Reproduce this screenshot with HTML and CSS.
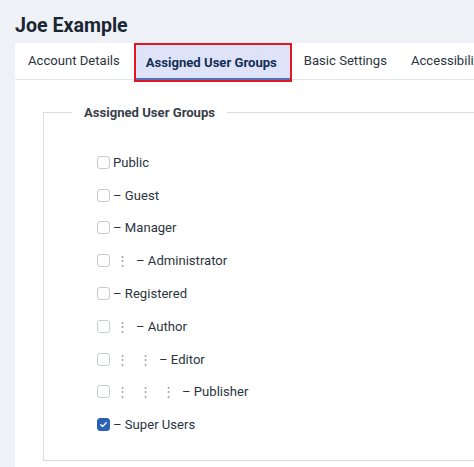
FILE: index.html
```html
<!DOCTYPE html>
<html>
<head>
<meta charset="utf-8">
<link rel="stylesheet" href="styles.css">
</head>
<body>
<div class="page">
  <h1 class="title">Joe Example</h1>
  <div class="card">
    <div class="tabs">
      <div class="tab">Account Details</div>
      <div class="tab active">Assigned User Groups</div>
      <div class="tab">Basic Settings</div>
      <div class="tab">Accessibility Settings</div>
    </div>
    <div class="body">
      <fieldset class="groups">
        <legend>Assigned User Groups</legend>
        <ul class="list">
          <li class="item"><span class="cb"></span><span class="label">Public</span></li>
          <li class="item"><span class="cb"></span><span class="label">– Guest</span></li>
          <li class="item"><span class="cb"></span><span class="label">– Manager</span></li>
          <li class="item"><span class="cb"></span><span class="dots">⋮</span><span class="label">– Administrator</span></li>
          <li class="item"><span class="cb"></span><span class="label">– Registered</span></li>
          <li class="item"><span class="cb"></span><span class="dots">⋮</span><span class="label">– Author</span></li>
          <li class="item"><span class="cb"></span><span class="dots">⋮</span><span class="dots">⋮</span><span class="label">– Editor</span></li>
          <li class="item"><span class="cb"></span><span class="dots">⋮</span><span class="dots">⋮</span><span class="dots">⋮</span><span class="label">– Publisher</span></li>
          <li class="item"><span class="cb checked"><svg viewBox="0 0 14 14" width="14" height="14"><path d="M3.6 7.2 L6 9.4 L10.4 4.8" fill="none" stroke="#fff" stroke-width="1.8" stroke-linecap="round" stroke-linejoin="round"/></svg></span><span class="label">– Super Users</span></li>
        </ul>
      </fieldset>
    </div>
  </div>
</div>
</body>
</html>
```

FILE: styles.css
```css
html, body {
  margin: 0;
  padding: 0;
}
body {
  background: #eef2f6;
  font-family: Roboto, "Liberation Sans", sans-serif;
  color: #22262a;
  overflow: hidden;
  width: 474px;
  height: 467px;
}
.page {
  padding: 14px 0 0 15px;
}
.title {
  margin: 0 0 5px 0;
  font-size: 19.6px;
  font-weight: 700;
  line-height: 24px;
  color: #1c2532;
}
.card {
  background: #fff;
  width: 520px;
  height: 440px;
}
.tabs {
  display: flex;
  height: 36px;
  border-bottom: 1px solid #e2e6ea;
  white-space: nowrap;
}
.tab {
  padding: 0 12px;
  font-size: 13.1px;
  line-height: 36px;
  color: #2b3440;
}
.tab:first-child {
  padding-left: 13px;
  padding-right: 14px;
}
.tab.active {
  margin: 0 0 -3px 0;
  padding: 0 13px 0 10px;
  line-height: 35px;
  background: #dfe3f8;
  color: #132e55;
  font-weight: 700;
  border: 2px solid #e4161f;
  box-shadow: inset 0 -2px 0 #4a74c4;
}
.body {
  padding: 25px 0 0 28px;
}
.groups {
  margin: 0;
  border: 1px solid #d8dde3;
  padding: 0;
  height: 354px;
}
.groups legend {
  padding: 0 12px;
  margin-left: 28px;
  font-size: 13.1px;
  font-weight: 700;
  color: #3a4048;
}
.list {
  list-style: none;
  margin: 26px 0 0 53px;
  padding: 0;
}
.item {
  display: flex;
  align-items: center;
  height: 32.8px;
  font-size: 13.1px;
  color: #2b3440;
}
.cb {
  width: 11px;
  height: 11px;
  border: 1px solid #c7cbd0;
  border-radius: 3px;
  margin-right: 3px;
  display: inline-flex;
  align-items: center;
  justify-content: center;
}
.cb.checked {
  background: #2a63b5;
  border-color: #2a63b5;
}
.cb svg {
  width: 11px;
  height: 11px;
}
.dots {
  color: #9aa0a6;
  width: 23px;
  font-size: 13px;
  text-align: left;
  padding-left: 3px;
  box-sizing: border-box;
}
.label {
  padding-left: 0;
}
```
